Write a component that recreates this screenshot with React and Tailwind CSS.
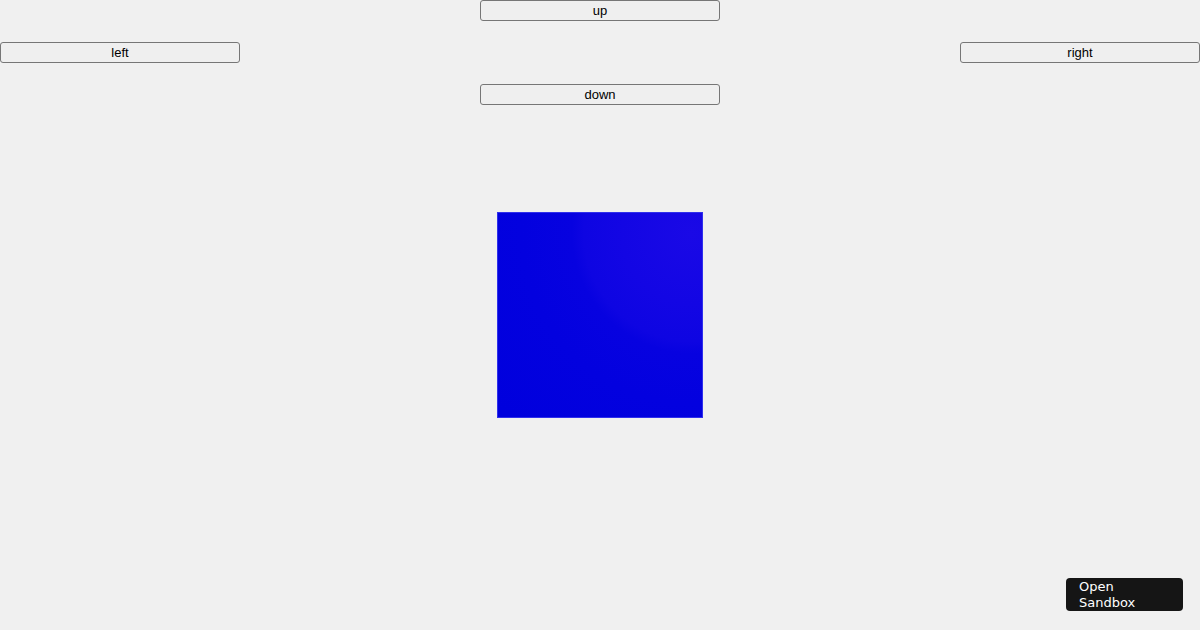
import React from "react";

function NavButton({ label, className = "" }) {
  return (
    <button
      type="button"
      className={
        "h-[21px] w-[240px] rounded-[3px] border border-[#767676] bg-[#efefef] text-[13px] leading-none text-black " +
        className
      }
      style={{ fontFamily: '"Liberation Sans", Arial, sans-serif' }}
    >
      {label}
    </button>
  );
}

export default function App() {
  return (
    <div className="relative h-[630px] w-[1200px] overflow-hidden bg-[#f0f0f0]">
      {/* controls */}
      <div className="flex flex-col gap-[21px]">
        <div className="flex justify-center">
          <NavButton label="up" />
        </div>
        <div className="flex justify-between">
          <NavButton label="left" />
          <NavButton label="right" />
        </div>
        <div className="flex justify-center">
          <NavButton label="down" />
        </div>
      </div>

      {/* scene */}
      <div className="mt-[107px] flex justify-center">
        <div className="h-[206px] w-[206px] border border-[#3030ec] bg-[radial-gradient(circle_at_95%_10%,#1a09e6_0px,#1306e4_70px,#0e05e2_108px,#0702e0_120px,#0301df_170px,#0000dd_260px)]" />
      </div>

      <button
        type="button"
        className="absolute bottom-[19px] right-[17px] h-[33px] w-[117px] rounded-[4px] bg-[#151515] pl-[13px] pt-[1px] text-left text-[13px] leading-[16px] text-white"
        style={{ fontFamily: '"DejaVu Sans", sans-serif' }}
      >
        Open
        <br />
        Sandbox
      </button>
    </div>
  );
}
